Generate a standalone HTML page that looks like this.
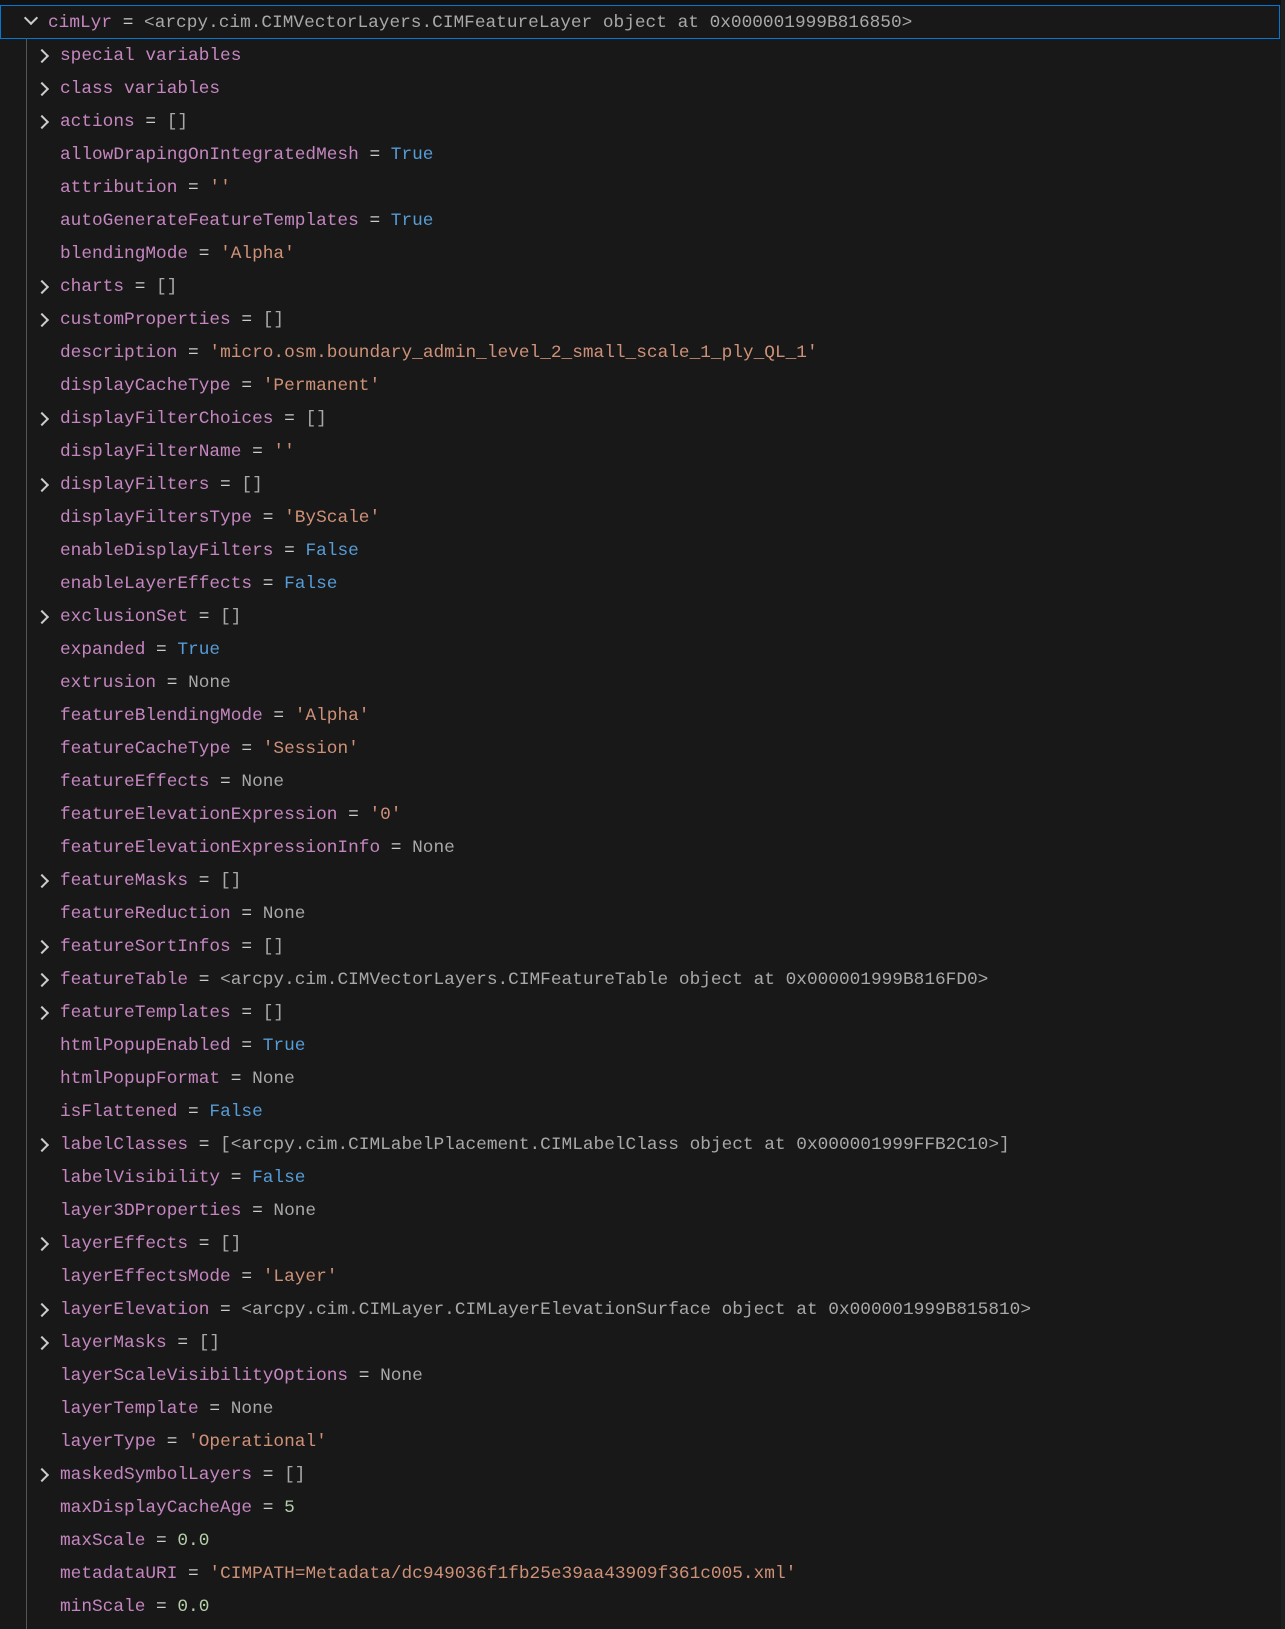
<!DOCTYPE html>
<html><head><meta charset="utf-8"><style>
html,body{margin:0;padding:0;background:#181818;width:1285px;height:1629px;overflow:hidden}
.top{position:absolute;left:0;top:0;width:1285px;height:5px;background:#111}
.sel{position:absolute;left:0;top:5px;width:1278px;height:32px;border:1px solid #0078d4;background:#181818}
.guide{position:absolute;left:26px;top:38px;width:1px;height:1591px;background:#555}
.sb{position:absolute;left:1281px;top:0;width:4px;height:1629px;background:#1f1f1f}
.r{position:absolute;left:60px;height:33px;line-height:33px;font-family:"Liberation Mono",monospace;font-size:17.8px;color:#ccc;white-space:pre}
.n{color:#c586c0}.s{color:#ce9178}.b{color:#569cd6}.g{color:#a8a8a8}.num{color:#b5cea8}
.c{position:absolute;width:8px;height:8px;border-right:2px solid #ccc;border-bottom:2px solid #ccc}
.cr{transform:rotate(-45deg)}.cd{transform:rotate(45deg)}
</style></head><body>
<div class="top"></div><div class="sel"></div><div class="guide"></div><div class="sb"></div>
<div class="c cd" style="left:26px;top:13px"></div>
<div class="r" style="left:48px;top:7px"><span class="n">cimLyr</span> = <span class="g">&lt;arcpy.cim.CIMVectorLayers.CIMFeatureLayer object at 0x000001999B816850&gt;</span></div>
<div id="rows"></div>
<script>
var rows=[
[1,'special variables'],[1,'class variables'],[1,'actions','[]','g'],
[0,'allowDrapingOnIntegratedMesh','True','b'],[0,'attribution',"''",'s'],
[0,'autoGenerateFeatureTemplates','True','b'],[0,'blendingMode',"'Alpha'",'s'],
[1,'charts','[]','g'],[1,'customProperties','[]','g'],
[0,'description',"'micro.osm.boundary_admin_level_2_small_scale_1_ply_QL_1'",'s'],
[0,'displayCacheType',"'Permanent'",'s'],[1,'displayFilterChoices','[]','g'],
[0,'displayFilterName',"''",'s'],[1,'displayFilters','[]','g'],
[0,'displayFiltersType',"'ByScale'",'s'],[0,'enableDisplayFilters','False','b'],
[0,'enableLayerEffects','False','b'],[1,'exclusionSet','[]','g'],
[0,'expanded','True','b'],[0,'extrusion','None','g'],
[0,'featureBlendingMode',"'Alpha'",'s'],[0,'featureCacheType',"'Session'",'s'],
[0,'featureEffects','None','g'],[0,'featureElevationExpression',"'0'",'s'],
[0,'featureElevationExpressionInfo','None','g'],[1,'featureMasks','[]','g'],
[0,'featureReduction','None','g'],[1,'featureSortInfos','[]','g'],
[1,'featureTable','<arcpy.cim.CIMVectorLayers.CIMFeatureTable object at 0x000001999B816FD0>','g'],
[1,'featureTemplates','[]','g'],[0,'htmlPopupEnabled','True','b'],
[0,'htmlPopupFormat','None','g'],[0,'isFlattened','False','b'],
[1,'labelClasses','[<arcpy.cim.CIMLabelPlacement.CIMLabelClass object at 0x000001999FFB2C10>]','g'],
[0,'labelVisibility','False','b'],[0,'layer3DProperties','None','g'],
[1,'layerEffects','[]','g'],[0,'layerEffectsMode',"'Layer'",'s'],
[1,'layerElevation','<arcpy.cim.CIMLayer.CIMLayerElevationSurface object at 0x000001999B815810>','g'],
[1,'layerMasks','[]','g'],[0,'layerScaleVisibilityOptions','None','g'],
[0,'layerTemplate','None','g'],[0,'layerType',"'Operational'",'s'],
[1,'maskedSymbolLayers','[]','g'],[0,'maxDisplayCacheAge','5','num'],
[0,'maxScale','0.0','num'],[0,'metadataURI',"'CIMPATH=Metadata/dc949036f1fb25e39aa43909f361c005.xml'",'s'],
[0,'minScale','0.0','num']];
var h='';
function esc(t){return t.replace(/&/g,'&amp;').replace(/</g,'&lt;').replace(/>/g,'&gt;')}
rows.forEach(function(r,i){var y=40+i*33;
if(r[0])h+='<div class="c cr" style="left:37px;top:'+(y+11)+'px"></div>';
h+='<div class="r" style="top:'+y+'px"><span class="n">'+r[1]+'</span>'+(r[2]?' = <span class="'+r[3]+'">'+esc(r[2])+'</span>':'')+'</div>';});
document.getElementById('rows').innerHTML=h;
</script>
</body></html>
